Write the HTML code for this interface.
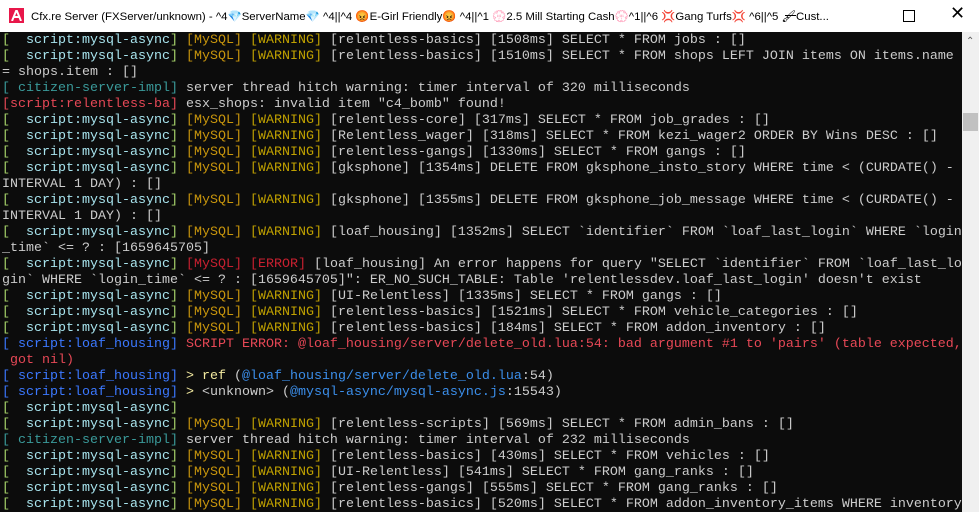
<!DOCTYPE html>
<html><head><meta charset="utf-8"><style>
body{margin:0;width:979px;height:512px;overflow:hidden;background:#0c0c0c;position:relative;}
#t{position:absolute;left:0;top:0;width:979px;height:32px;background:#fff;font:11.4px "Liberation Sans","Noto Sans CJK SC",sans-serif;color:#000;}
#t .ttl{position:absolute;left:31px;top:9px;white-space:nowrap;width:810px;overflow:hidden;}
#t .ic{position:absolute;left:9px;top:8px;width:15px;height:15px;background:#e8174a;}
#t .ctl{position:absolute;top:4px;font-size:18px;font-weight:300;}
#c{position:absolute;left:2px;top:33px;width:960px;height:479px;overflow:hidden;}
pre{margin:0;font:13.33px/16px "Liberation Mono",monospace;color:#cccccc;white-space:pre;}
.b{color:#a6d36a}.n{color:#a8e4ee}.m{color:#c9960c}.w{color:#bfa000}.ci{color:#3a9a9a}.r{color:#e74856}.rd{color:#c92030}.bl{color:#3b78ff}.y{color:#f3eaa0}.p{color:#3b8eea}
#s{position:absolute;left:962px;top:32px;width:17px;height:480px;background:#f0f0f0;}
#s .th{position:absolute;left:1px;top:81px;width:15px;height:18px;background:#c1c1c1;}
#s .up{position:absolute;left:4px;top:4px;font:10px "Liberation Sans",sans-serif;color:#606060;}
</style></head><body>
<div id="t"><div class="ic"></div><svg style="position:absolute;left:11px;top:10px" width="11" height="11"><path d="M1 11 L5.5 0 L10 11 M3 7 H8" stroke="#fff" stroke-width="2" fill="none"/></svg><div class="ttl">Cfx.re Server (FXServer/unknown) - ^4💎ServerName💎 ^4||^4 😡E-Girl Friendly😡 ^4||^1 💮2.5 Mill Starting Cash💮^1||^6 💢Gang Turfs💢 ^6||^5 🖌Cust...</div>
<div style="position:absolute;left:785px;top:15px;width:11px;height:1px;background:#000"></div>
<div style="position:absolute;left:903px;top:10px;width:10px;height:10px;border:1px solid #000"></div>
<div class="ctl" style="left:950px;top:3px">✕</div></div>
<div id="c"><pre><span class="b">[</span><span class="n">  script:mysql-async</span><span class="b">]</span> <span class="m">[MySQL]</span> <span class="w">[WARNING]</span> [relentless-basics] [1508ms] SELECT * FROM jobs : []
<span class="b">[</span><span class="n">  script:mysql-async</span><span class="b">]</span> <span class="m">[MySQL]</span> <span class="w">[WARNING]</span> [relentless-basics] [1510ms] SELECT * FROM shops LEFT JOIN items ON items.name
= shops.item : []
<span class="ci">[ citizen-server-impl]</span> server thread hitch warning: timer interval of 320 milliseconds
<span class="r">[script:relentless-ba]</span> esx_shops: invalid item "c4_bomb" found!
<span class="b">[</span><span class="n">  script:mysql-async</span><span class="b">]</span> <span class="m">[MySQL]</span> <span class="w">[WARNING]</span> [relentless-core] [317ms] SELECT * FROM job_grades : []
<span class="b">[</span><span class="n">  script:mysql-async</span><span class="b">]</span> <span class="m">[MySQL]</span> <span class="w">[WARNING]</span> [Relentless_wager] [318ms] SELECT * FROM kezi_wager2 ORDER BY Wins DESC : []
<span class="b">[</span><span class="n">  script:mysql-async</span><span class="b">]</span> <span class="m">[MySQL]</span> <span class="w">[WARNING]</span> [relentless-gangs] [1330ms] SELECT * FROM gangs : []
<span class="b">[</span><span class="n">  script:mysql-async</span><span class="b">]</span> <span class="m">[MySQL]</span> <span class="w">[WARNING]</span> [gksphone] [1354ms] DELETE FROM gksphone_insto_story WHERE time &lt; (CURDATE() -
INTERVAL 1 DAY) : []
<span class="b">[</span><span class="n">  script:mysql-async</span><span class="b">]</span> <span class="m">[MySQL]</span> <span class="w">[WARNING]</span> [gksphone] [1355ms] DELETE FROM gksphone_job_message WHERE time &lt; (CURDATE() -
INTERVAL 1 DAY) : []
<span class="b">[</span><span class="n">  script:mysql-async</span><span class="b">]</span> <span class="m">[MySQL]</span> <span class="w">[WARNING]</span> [loaf_housing] [1352ms] SELECT `identifier` FROM `loaf_last_login` WHERE `login
_time` &lt;= ? : [1659645705]
<span class="b">[</span><span class="n">  script:mysql-async</span><span class="b">]</span> <span class="rd">[MySQL]</span> <span class="rd">[ERROR]</span> [loaf_housing] An error happens for query "SELECT `identifier` FROM `loaf_last_lo
gin` WHERE `login_time` &lt;= ? : [1659645705]": ER_NO_SUCH_TABLE: Table 'relentlessdev.loaf_last_login' doesn't exist
<span class="b">[</span><span class="n">  script:mysql-async</span><span class="b">]</span> <span class="m">[MySQL]</span> <span class="w">[WARNING]</span> [UI-Relentless] [1335ms] SELECT * FROM gangs : []
<span class="b">[</span><span class="n">  script:mysql-async</span><span class="b">]</span> <span class="m">[MySQL]</span> <span class="w">[WARNING]</span> [relentless-basics] [1521ms] SELECT * FROM vehicle_categories : []
<span class="b">[</span><span class="n">  script:mysql-async</span><span class="b">]</span> <span class="m">[MySQL]</span> <span class="w">[WARNING]</span> [relentless-basics] [184ms] SELECT * FROM addon_inventory : []
<span class="bl">[ script:loaf_housing]</span> <span class="r">SCRIPT ERROR: @loaf_housing/server/delete_old.lua:54: bad argument #1 to 'pairs' (table expected,</span>
<span class="r"> got nil)</span>
<span class="bl">[ script:loaf_housing]</span> <span class="y">&gt; ref</span> (<span class="p">@loaf_housing/server/delete_old.lua</span>:54)
<span class="bl">[ script:loaf_housing]</span> <span class="y">&gt;</span> &lt;unknown&gt; (<span class="p">@mysql-async/mysql-async.js</span>:15543)
<span class="b">[</span><span class="n">  script:mysql-async</span><span class="b">]</span>
<span class="b">[</span><span class="n">  script:mysql-async</span><span class="b">]</span> <span class="m">[MySQL]</span> <span class="w">[WARNING]</span> [relentless-scripts] [569ms] SELECT * FROM admin_bans : []
<span class="ci">[ citizen-server-impl]</span> server thread hitch warning: timer interval of 232 milliseconds
<span class="b">[</span><span class="n">  script:mysql-async</span><span class="b">]</span> <span class="m">[MySQL]</span> <span class="w">[WARNING]</span> [relentless-basics] [430ms] SELECT * FROM vehicles : []
<span class="b">[</span><span class="n">  script:mysql-async</span><span class="b">]</span> <span class="m">[MySQL]</span> <span class="w">[WARNING]</span> [UI-Relentless] [541ms] SELECT * FROM gang_ranks : []
<span class="b">[</span><span class="n">  script:mysql-async</span><span class="b">]</span> <span class="m">[MySQL]</span> <span class="w">[WARNING]</span> [relentless-gangs] [555ms] SELECT * FROM gang_ranks : []
<span class="b">[</span><span class="n">  script:mysql-async</span><span class="b">]</span> <span class="m">[MySQL]</span> <span class="w">[WARNING]</span> [relentless-basics] [520ms] SELECT * FROM addon_inventory_items WHERE inventory
</pre></div>
<div id="s"><div class="up">⌃</div><div class="th"></div></div>
</body></html>
